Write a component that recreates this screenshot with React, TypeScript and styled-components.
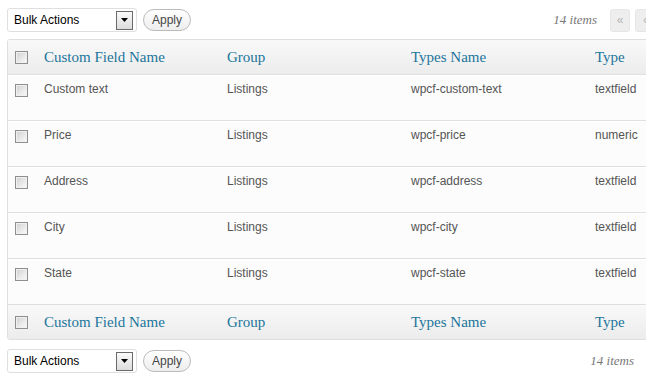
import { createGlobalStyle, styled } from "styled-components";

const GlobalStyle = createGlobalStyle`
  html, body {
    margin: 0;
    padding: 0;
    background: #fff;
    overflow: hidden;
  }
  body {
    font-family: "Liberation Sans", Arial, sans-serif;
    font-size: 12px;
    color: #333;
  }
`;

interface Field {
  name: string;
  group: string;
  slug: string;
  type: string;
}

const fields: Field[] = [
  { name: "Custom text", group: "Listings", slug: "wpcf-custom-text", type: "textfield" },
  { name: "Price", group: "Listings", slug: "wpcf-price", type: "numeric" },
  { name: "Address", group: "Listings", slug: "wpcf-address", type: "textfield" },
  { name: "City", group: "Listings", slug: "wpcf-city", type: "textfield" },
  { name: "State", group: "Listings", slug: "wpcf-state", type: "textfield" },
];

function TopNavBar({ bottom }: { bottom?: boolean }) {
  return (
    <TableNav $bottom={bottom}>
      <Select>
        <span>Bulk Actions</span>
        <SelectArrow>
          <svg width="7" height="4" viewBox="0 0 7 4">
            <path d="M0 0h7L3.5 4z" fill="#000" />
          </svg>
        </SelectArrow>
      </Select>
      <ApplyButton>Apply</ApplyButton>
      <Spacer />
      <ItemCount $trail={bottom ? 73 : 13}>14 items</ItemCount>
      {!bottom && (
        <PageLinks>
          <PageButton>«</PageButton>
          <PageButton>‹</PageButton>
        </PageLinks>
      )}
    </TableNav>
  );
}

function HeaderRow() {
  return (
    <tr>
      <HeadCheck>
        <Check />
      </HeadCheck>
      <HeadCell>Custom Field Name</HeadCell>
      <HeadCell>Group</HeadCell>
      <HeadCell>Types Name</HeadCell>
      <HeadCell>Type</HeadCell>
    </tr>
  );
}

export default function App() {
  return (
    <>
      <GlobalStyle />
      <Page>
        <TopNavBar />
        <Table>
          <colgroup>
            <col style={{ width: 28 }} />
            <col style={{ width: 183 }} />
            <col style={{ width: 184 }} />
            <col style={{ width: 184 }} />
            <col />
          </colgroup>
          <thead>
            <HeaderRow />
          </thead>
          <tbody>
            {fields.map((f) => (
              <Row key={f.slug}>
                <CheckCell>
                  <Check />
                </CheckCell>
                <Cell>{f.name}</Cell>
                <Cell>{f.group}</Cell>
                <Cell>{f.slug}</Cell>
                <Cell>{f.type}</Cell>
              </Row>
            ))}
          </tbody>
          <tfoot>
            <HeaderRow />
          </tfoot>
        </Table>
        <TopNavBar bottom />
      </Page>
    </>
  );
}

const Page = styled.div`
  width: 700px;
  padding: 8px 0 0 7px;
`;

const TableNav = styled.div<{ $bottom?: boolean }>`
  display: flex;
  align-items: center;
  height: 24px;
  margin: ${(p) => (p.$bottom ? "9px 0 0" : "0 0 7px")};
`;

const Select = styled.div`
  box-sizing: border-box;
  width: 130px;
  height: 24px;
  display: flex;
  align-items: center;
  justify-content: space-between;
  padding: 0 3px 0 6px;
  border: 1px solid #dfdfdf;
  border-radius: 3px;
  background: #fff;
  color: #000;
  font-size: 12px;
`;

const SelectArrow = styled.div`
  box-sizing: border-box;
  width: 17px;
  height: 19px;
  display: flex;
  align-items: center;
  justify-content: center;
  border: 1px solid #6a6a6a;
  background: linear-gradient(to bottom, #fafafa, #dcdcdc);
`;

const ApplyButton = styled.button`
  box-sizing: border-box;
  height: 22px;
  margin-left: 6px;
  padding: 0 8px;
  border: 1px solid #bbb;
  border-radius: 11px;
  background: linear-gradient(to bottom, #fff, #ededed);
  color: #464646;
  font-family: "Liberation Sans", Arial, sans-serif;
  font-size: 12px;
  line-height: 20px;
`;

const Spacer = styled.div`
  flex: 1;
`;

const ItemCount = styled.span<{ $trail: number }>`
  margin-right: ${(p) => p.$trail}px;
  color: #777;
  font-family: "Liberation Serif", "Times New Roman", serif;
  font-style: italic;
  font-size: 13px;
`;

const PageLinks = styled.div`
  display: flex;
  gap: 5px;
  margin-right: 52px;
`;

const PageButton = styled.span`
  box-sizing: border-box;
  width: 20px;
  height: 23px;
  display: flex;
  align-items: center;
  justify-content: center;
  border: 1px solid #e6e6e6;
  border-radius: 3px;
  background: #eee;
  color: #b5b5b5;
  font-size: 12px;
`;

const Table = styled.table`
  width: 100%;
  table-layout: fixed;
  border-collapse: separate;
  border-spacing: 0;
  border: 1px solid #dfdfdf;
  border-radius: 3px;
  background: #f9f9f9;
`;

const HeadCell = styled.th`
  height: 34px;
  padding: 0 8px;
  text-align: left;
  font-family: "Liberation Serif", Georgia, serif;
  font-weight: normal;
  font-size: 15px;
  color: #21759b;
  background: linear-gradient(to bottom, #f9f9f9, #ececec);
  thead & {
    border-bottom: 1px solid #dfdfdf;
  }
`;

const HeadCheck = styled(HeadCell)`
  padding: 0 0 0 7px;
`;

const Row = styled.tr`
  background: #fcfcfc;
`;

const Cell = styled.td`
  height: 46px;
  box-sizing: border-box;
  padding: 4px 8px 0;
  vertical-align: top;
  line-height: 18px;
  color: #555;
  border-top: 1px solid #fff;
  border-bottom: 1px solid #dfdfdf;
  white-space: nowrap;
`;

const CheckCell = styled(Cell)`
  padding: 8px 0 0 7px;
`;

const Check = styled.span`
  display: block;
  box-sizing: border-box;
  width: 13px;
  height: 13px;
  border: 1px solid #8f8f8f;
  background: linear-gradient(135deg, #cfcfcf, #fdfdfd);
  box-shadow: inset 0 0 0 1px #f0f0f0;
`;
